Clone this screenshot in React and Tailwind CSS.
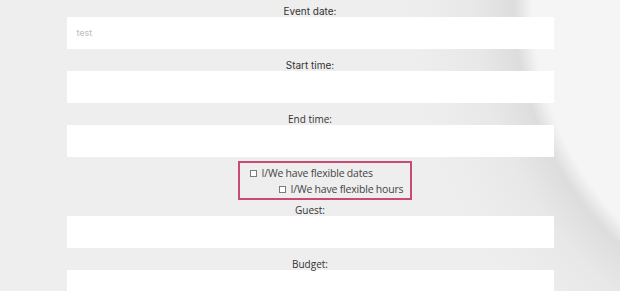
import React from 'react';

const labelInter = "text-[10px] leading-[12px] text-center text-[#333] font-['Inter',sans-serif]";
const labelOpen = "text-[10px] leading-[12px] text-center text-[#333] font-['Open_Sans',sans-serif]";

const Field = ({ label, className, labelClass, placeholder }) => (
  <div className={className}>
    <div className={labelClass}>{label}</div>
    <div className="h-[32px] bg-white flex items-center px-[10px]">
      {placeholder && (
        <span className="text-[9px] text-[#bdbdbd] font-['Inter',sans-serif]">{placeholder}</span>
      )}
    </div>
  </div>
);

const Check = ({ text, className }) => (
  <div className={`flex items-center h-[16px] gap-[5px] ${className}`}>
    <span className="w-[7px] h-[7px] border border-[#7a7a7a] bg-white shrink-0" />
    <span className="text-[10.5px] tracking-[-0.2px] leading-[16px] text-[#444] font-['Open_Sans',sans-serif] whitespace-nowrap">{text}</span>
  </div>
);

export default function App() {
  return (
    <div className="w-[620px] h-[291px] overflow-hidden bg-[#eeeeee] bg-[radial-gradient(circle_440px_at_850px_0px,#f5f5f5_318px,#dddddd_336px,#e8e8e8_375px,#eeeeee_440px)]">
      <div className="w-[487px] mx-auto pt-[5px]">
        <Field label="Event date:" labelClass={labelInter} placeholder="test" />
        <Field label="Start time:" labelClass={labelInter} className="mt-[10px]" />
        <Field label="End time:" labelClass={labelOpen} className="mt-[10px]" />

        <div className="mt-[4px] ml-[171px] w-[174px] h-[39px] border-2 border-[#c94b74] pt-[2px] pb-[1px]">
          <Check text="I/We have flexible dates" className="pl-[10px]" />
          <Check text="I/We have flexible hours" className="pl-[39px]" />
        </div>

        <Field label="Guest:" labelClass={labelOpen} className="mt-[4px]" />
        <Field label="Budget:" labelClass={labelOpen} className="mt-[10px]" />
      </div>
    </div>
  );
}
